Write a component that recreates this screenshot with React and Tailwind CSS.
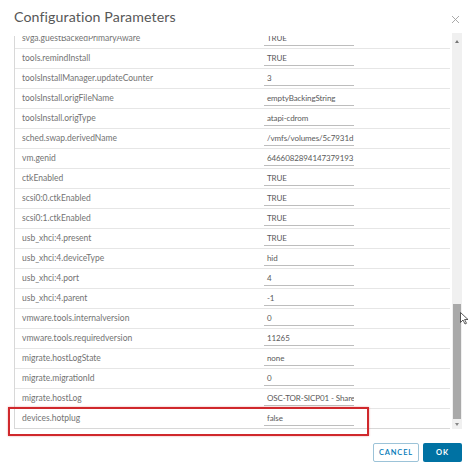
const rows = [
  ["svga.guestBackedPrimaryAware", "TRUE"],
  ["tools.remindInstall", "TRUE"],
  ["toolsInstallManager.updateCounter", "3"],
  ["toolsInstall.origFileName", "emptyBackingString"],
  ["toolsInstall.origType", "atapi-cdrom"],
  ["sched.swap.derivedName", "/vmfs/volumes/5c7931d"],
  ["vm.genid", "6466082894147379193"],
  ["ctkEnabled", "TRUE"],
  ["scsi0:0.ctkEnabled", "TRUE"],
  ["scsi0:1.ctkEnabled", "TRUE"],
  ["usb_xhci:4.present", "TRUE"],
  ["usb_xhci:4.deviceType", "hid"],
  ["usb_xhci:4.port", "4"],
  ["usb_xhci:4.parent", "-1"],
  ["vmware.tools.internalversion", "0"],
  ["vmware.tools.requiredversion", "11265"],
  ["migrate.hostLogState", "none"],
  ["migrate.migrationId", "0"],
  ["migrate.hostLog", "OSC-TOR-SICP01 - Share"],
  ["devices.hotplug", "false"],
];

function Row({ name, value }) {
  return (
    <div className="flex h-[20px] items-center border-b border-[#e6e6e6]">
      <div className="w-[249px] pl-[7px] text-[8.5px] text-[#737373] truncate">{name}</div>
      <div className="w-[90px] h-[15px] border-b border-[#bdbdbd] pl-[3px] text-[8px] tracking-[-0.1px] text-[#5a5a5a] leading-[14px] overflow-hidden whitespace-nowrap">
        {value}
      </div>
    </div>
  );
}

export default function App() {
  return (
    <div className="relative w-[474px] h-[473px] bg-white font-['Lato',sans-serif] overflow-hidden">
      {/* Header */}
      <div className="flex items-center justify-between h-[33px] pl-[14px] pr-[12px]">
        <h1 className="text-[14.2px] text-[#575757] tracking-[0.1px]">Configuration Parameters</h1>
        <svg width="9" height="9" viewBox="0 0 9 9" className="mb-[-6px] mr-[2px]">
          <path d="M1 1 L8 8 M8 1 L1 8" stroke="#a0a0a0" strokeWidth="0.9" />
        </svg>
      </div>

      {/* Table + scrollbar */}
      <div className="flex ml-[14px] w-[448px] h-[396px]">
        <div className="flex-1 mt-[3px] border-l border-b border-[#d8d8d8] overflow-hidden">
          <div className="-mt-[7px]">
            {rows.map(([n, v]) => (
              <Row key={n} name={n} value={v} />
            ))}
          </div>
        </div>
        <div className="w-[10px] ml-[2px] bg-[#f0f0f0] flex flex-col items-center">
          <div className="h-[16px] flex items-center justify-center">
            <div className="w-0 h-0 border-l-[2.5px] border-r-[2.5px] border-b-[3px] border-l-transparent border-r-transparent border-b-[#777]" />
          </div>
          <div className="flex-1" />
          <div className="w-[8px] h-[115px] bg-[#a9a9a9]" />
          <div className="h-[10px] flex items-center justify-center">
            <div className="w-0 h-0 border-l-[2.5px] border-r-[2.5px] border-t-[3px] border-l-transparent border-r-transparent border-t-[#888]" />
          </div>
        </div>
      </div>

      {/* Footer buttons */}
      <div className="flex justify-end gap-[4px] pr-[12px] mt-[14px]">
        <button className="w-[46px] h-[19px] border border-[#9cc3d8] rounded-[2px] text-[7.5px] font-semibold tracking-[0.8px] text-[#0079b8]">
          CANCEL
        </button>
        <button className="w-[39px] h-[19px] bg-[#0072a3] rounded-[2px] text-[7.5px] font-bold tracking-[0.8px] text-white">
          OK
        </button>
      </div>

      {/* Red highlight overlay */}
      <div className="absolute left-[8px] top-[407px] w-[361px] h-[29px] border-2 border-[#d0282c] shadow-[0_0_2px_rgba(208,40,44,0.4)]" />

      {/* Mouse cursor */}
      <svg className="absolute left-[460px] top-[312px]" width="9" height="13" viewBox="0 0 9 13">
        <path d="M0.5 0.5 L0.5 10.5 L3 8 L5 12 L6.5 11.3 L4.6 7.5 L8 7.5 Z" fill="white" stroke="#333" strokeWidth="0.8" />
      </svg>
    </div>
  );
}
